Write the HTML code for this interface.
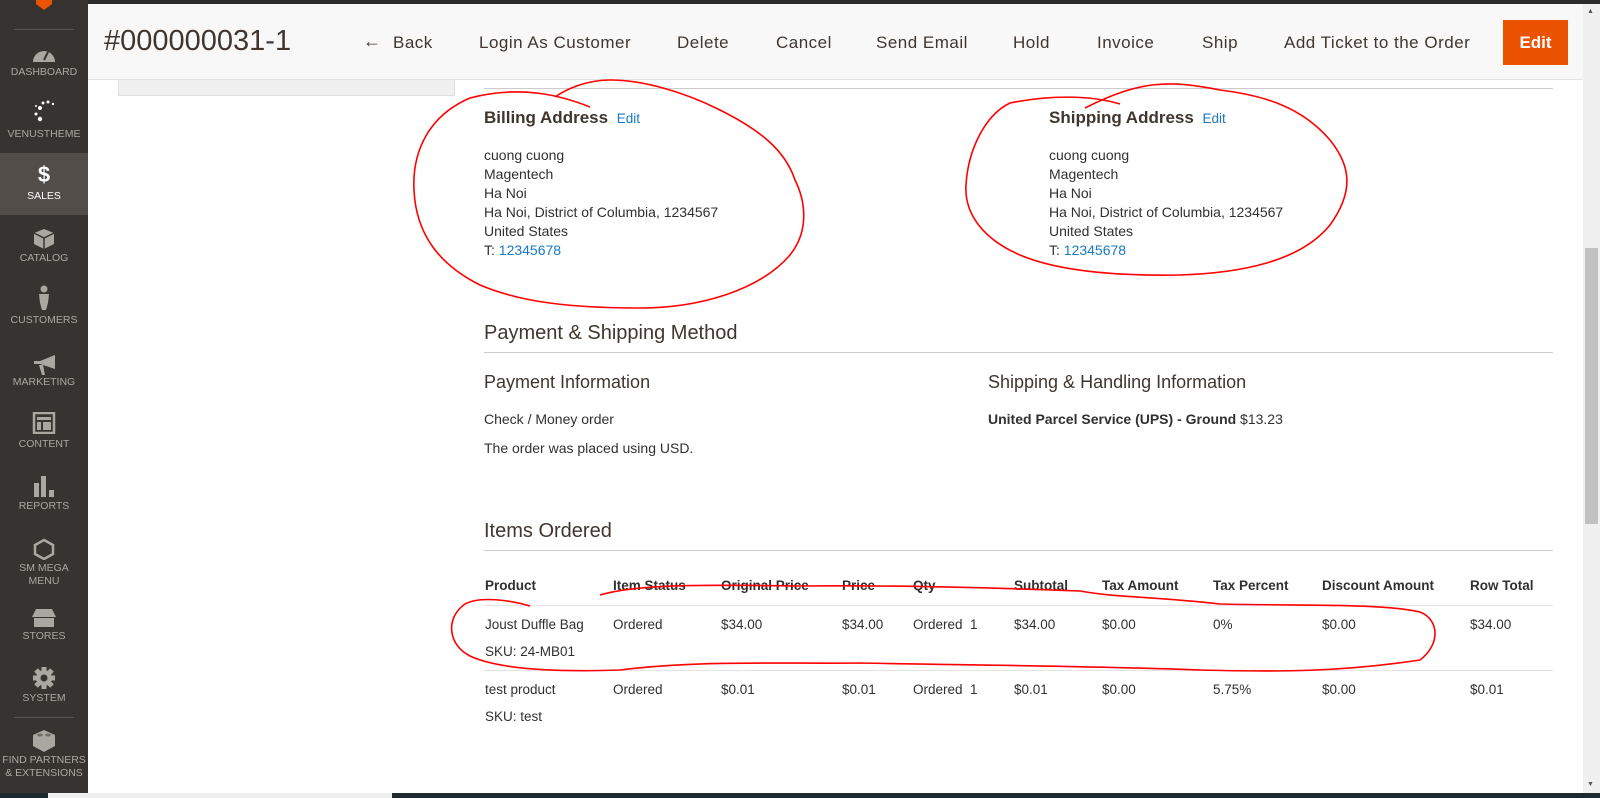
<!DOCTYPE html>
<html><head><meta charset="utf-8"><style>
*{margin:0;padding:0;box-sizing:border-box}
body{width:1600px;height:798px;overflow:hidden;background:#fff;font-family:"Liberation Sans",sans-serif;color:#303030;position:relative}
.a{position:absolute;white-space:nowrap}
#sb{position:absolute;left:0;top:0;width:88px;height:793px;background:#373330}
.lab{position:absolute;left:0;width:88px;text-align:center;font-size:10.5px;color:#aaa6a0;line-height:13px}
.ico{position:absolute;left:0;width:88px}
#hd{position:absolute;left:88px;top:4px;width:1495px;height:76px;background:#f8f8f8;border-bottom:1px solid #e3e3e3}
.nb{position:absolute;top:33px;font-size:17px;color:#41362f;letter-spacing:.5px}
.t{font-size:14px;color:#303030}
.h3{font-size:20px;font-weight:300;color:#41362f}
.hr{position:absolute;left:484px;width:1069px;height:1px;background:#cccccc}
.th{font-size:13.5px;font-weight:bold;color:#303030}
.td{font-size:13.5px;color:#303030}
.blue{color:#1979c3}
</style></head><body>
<div class="a" style="left:0;top:0;width:1600px;height:4px;background:#2c2c2c"></div>
<div id="sb">
 <div class="a" style="left:36px;top:0;width:16px;height:10px;background:#eb5202;clip-path:polygon(0 0,100% 0,100% 40%,50% 100%,0 40%)"></div>
 <div class="a" style="left:14px;top:29px;width:60px;height:1px;background:#5a5551"></div>
 <svg class="ico" style="top:45px" height="18" viewBox="0 0 88 18"><path d="M33 17 A11 11 0 0 1 55 17 Z" fill="#aaa6a0"/><path d="M44 15 L48 7" stroke="#373330" stroke-width="2"/></svg>
 <div class="lab" style="top:66px">DASHBOARD</div>
 <svg class="ico" style="top:100px" height="26" viewBox="0 0 88 26"><g fill="#fff"><circle cx="43" cy="3" r="1.5"/><circle cx="48" cy="2" r="1.5"/><circle cx="53" cy="4" r="1.2"/><circle cx="40" cy="8" r="2"/><circle cx="36" cy="6" r="1"/><circle cx="36" cy="14" r="1.5"/><circle cx="40" cy="19" r="2.2"/></g></svg>
 <div class="lab" style="top:128px">VENUSTHEME</div>
 <div class="a" style="left:0;top:153px;width:88px;height:62px;background:#524d49"></div>
 <div class="lab" style="top:163px;font-size:22px;font-weight:bold;color:#fff;line-height:24px">$</div>
 <div class="lab" style="top:190px;color:#fff">SALES</div>
 <svg class="ico" style="top:228px" height="22" viewBox="0 0 88 22"><path d="M44 1 L54 5 L54 16 L44 21 L34 16 L34 5 Z" fill="#aaa6a0"/><path d="M34 5 L44 10 L54 5 M44 10 V21" stroke="#373330" stroke-width="1.5" fill="none"/></svg>
 <div class="lab" style="top:252px">CATALOG</div>
 <svg class="ico" style="top:285px" height="26" viewBox="0 0 88 26"><circle cx="44" cy="4" r="3.5" fill="#aaa6a0"/><path d="M39 9 H49 L48 18 L46 25 H42 L40 18 Z" fill="#aaa6a0"/></svg>
 <div class="lab" style="top:314px">CUSTOMERS</div>
 <svg class="ico" style="top:354px" height="22" viewBox="0 0 88 22"><path d="M34 7 H40 L55 1 V15 L40 10 H34 Z M39 11 L42 21 H45 L43 11 Z" fill="#aaa6a0"/></svg>
 <div class="lab" style="top:376px">MARKETING</div>
 <svg class="ico" style="top:412px" height="22" viewBox="0 0 88 22"><rect x="34" y="1" width="20" height="20" fill="none" stroke="#aaa6a0" stroke-width="2.5"/><rect x="37" y="5" width="14" height="3" fill="#aaa6a0"/><rect x="37" y="10" width="4" height="8" fill="#aaa6a0"/><rect x="43" y="10" width="8" height="8" fill="#aaa6a0"/></svg>
 <div class="lab" style="top:438px">CONTENT</div>
 <svg class="ico" style="top:476px" height="21" viewBox="0 0 88 21"><rect x="34" y="7" width="5" height="14" fill="#aaa6a0"/><rect x="41" y="0" width="5" height="21" fill="#aaa6a0"/><rect x="49" y="14" width="5" height="7" fill="#aaa6a0"/></svg>
 <div class="lab" style="top:500px">REPORTS</div>
 <svg class="ico" style="top:538px" height="22" viewBox="0 0 88 22"><path d="M44 2 L53 7 V16 L44 21 L35 16 V7 Z" fill="none" stroke="#aaa6a0" stroke-width="2.5"/></svg>
 <div class="lab" style="top:562px">SM MEGA<br>MENU</div>
 <svg class="ico" style="top:608px" height="20" viewBox="0 0 88 20"><path d="M36 1 H52 L56 9 H32 Z" fill="#aaa6a0"/><rect x="34" y="10" width="20" height="9" fill="#aaa6a0"/></svg>
 <div class="lab" style="top:630px">STORES</div>
 <svg class="ico" style="top:667px" height="22" viewBox="0 0 88 22"><circle cx="44" cy="11" r="8" fill="#aaa6a0"/><g stroke="#aaa6a0" stroke-width="5"><path d="M44 0 V22 M33 11 H55 M36 3 L52 19 M52 3 L36 19"/></g><circle cx="44" cy="11" r="3.5" fill="#373330"/></svg>
 <div class="lab" style="top:692px">SYSTEM</div>
 <div class="a" style="left:14px;top:717px;width:60px;height:1px;background:#5a5551"></div>
 <svg class="ico" style="top:729px" height="24" viewBox="0 0 88 24"><path d="M44 1 L55 6 V17 L44 23 L33 17 V6 Z" fill="#aaa6a0"/><ellipse cx="40" cy="6" rx="3" ry="1.5" fill="#373330" opacity=".5"/><ellipse cx="48" cy="6" rx="3" ry="1.5" fill="#373330" opacity=".5"/></svg>
 <div class="lab" style="top:754px">FIND PARTNERS<br>&amp; EXTENSIONS</div>
</div>
<div id="hd"></div>
<div class="a" style="left:104px;top:25px;font-size:29px;color:#41362f">#000000031-1</div>
<div class="nb" style="left:363px;top:31px;font-size:18px">&#8592;</div>
<div class="nb" style="left:393px">Back</div>
<div class="nb" style="left:479px">Login As Customer</div>
<div class="nb" style="left:677px">Delete</div>
<div class="nb" style="left:776px">Cancel</div>
<div class="nb" style="left:876px">Send Email</div>
<div class="nb" style="left:1013px">Hold</div>
<div class="nb" style="left:1097px">Invoice</div>
<div class="nb" style="left:1202px">Ship</div>
<div class="nb" style="left:1284px">Add Ticket to the Order</div>
<div class="a" style="left:1503px;top:20px;width:65px;height:45px;background:#eb5202;color:#fff;font-size:17px;font-weight:bold;text-align:center;line-height:45px">Edit</div>
<div class="a" style="left:1583px;top:4px;width:17px;height:789px;background:#f0f0f0"></div>
<div class="a" style="left:1585px;top:248px;width:13px;height:276px;background:#c1c1c1"></div>
<div class="a" style="left:1587px;top:8px;font-size:7px;color:#555">&#9650;</div>
<div class="a" style="left:1587px;top:781px;font-size:7px;color:#555">&#9660;</div>
<div class="a" style="left:0;top:793px;width:1600px;height:5px;background:#1f2a30"></div>
<div class="a" style="left:48px;top:793px;width:344px;height:5px;background:#f0f0f0"></div>
<div class="a" style="left:118px;top:80px;width:337px;height:16px;background:#f0f0f0;border:1px solid #e0e0e0;border-top:none"></div>

<div class="hr" style="top:88px"></div>
<div class="a" style="left:484px;top:108px;font-size:17px;font-weight:600;color:#41362f">Billing Address <span class="blue" style="font-size:13.5px;font-weight:normal;margin-left:4px">Edit</span></div>
<div class="a t" style="left:484px;top:146px;line-height:19px">cuong cuong<br>Magentech<br>Ha Noi<br>Ha Noi, District of Columbia, 1234567<br>United States<br>T: <span class="blue">12345678</span></div>
<div class="a" style="left:1049px;top:108px;font-size:17px;font-weight:600;color:#41362f">Shipping Address <span class="blue" style="font-size:13.5px;font-weight:normal;margin-left:4px">Edit</span></div>
<div class="a t" style="left:1049px;top:146px;line-height:19px">cuong cuong<br>Magentech<br>Ha Noi<br>Ha Noi, District of Columbia, 1234567<br>United States<br>T: <span class="blue">12345678</span></div>

<div class="a h3" style="left:484px;top:322px">Payment &amp; Shipping Method</div>
<div class="hr" style="top:352px"></div>
<div class="a" style="left:484px;top:372px;font-size:18px;color:#41362f">Payment Information</div>
<div class="a" style="left:988px;top:372px;font-size:18px;color:#41362f">Shipping &amp; Handling Information</div>
<div class="a t" style="left:484px;top:411px">Check / Money order</div>
<div class="a t" style="left:484px;top:440px">The order was placed using USD.</div>
<div class="a t" style="left:988px;top:411px"><b>United Parcel Service (UPS) - Ground</b> $13.23</div>

<div class="a h3" style="left:484px;top:520px">Items Ordered</div>
<div class="hr" style="top:550px"></div>
<div class="a th" style="left:485px;top:578px">Product</div>
<div class="a th" style="left:613px;top:578px">Item Status</div>
<div class="a th" style="left:721px;top:578px">Original Price</div>
<div class="a th" style="left:842px;top:578px">Price</div>
<div class="a th" style="left:913px;top:578px">Qty</div>
<div class="a th" style="left:1014px;top:578px">Subtotal</div>
<div class="a th" style="left:1102px;top:578px">Tax Amount</div>
<div class="a th" style="left:1213px;top:578px">Tax Percent</div>
<div class="a th" style="left:1322px;top:578px">Discount Amount</div>
<div class="a th" style="left:1470px;top:578px">Row Total</div>
<div class="a" style="left:484px;top:605px;width:1069px;height:1px;background:#e3e3e3"></div>
<div class="a td" style="left:485px;top:617px">Joust Duffle Bag</div>
<div class="a td" style="left:485px;top:644px">SKU: 24-MB01</div>
<div class="a td" style="left:613px;top:617px">Ordered</div>
<div class="a td" style="left:721px;top:617px">$34.00</div>
<div class="a td" style="left:842px;top:617px">$34.00</div>
<div class="a td" style="left:913px;top:617px">Ordered&nbsp; 1</div>
<div class="a td" style="left:1014px;top:617px">$34.00</div>
<div class="a td" style="left:1102px;top:617px">$0.00</div>
<div class="a td" style="left:1213px;top:617px">0%</div>
<div class="a td" style="left:1322px;top:617px">$0.00</div>
<div class="a td" style="left:1470px;top:617px">$34.00</div>
<div class="a" style="left:484px;top:670px;width:1069px;height:1px;background:#e3e3e3"></div>
<div class="a td" style="left:485px;top:682px">test product</div>
<div class="a td" style="left:485px;top:709px">SKU: test</div>
<div class="a td" style="left:613px;top:682px">Ordered</div>
<div class="a td" style="left:721px;top:682px">$0.01</div>
<div class="a td" style="left:842px;top:682px">$0.01</div>
<div class="a td" style="left:913px;top:682px">Ordered&nbsp; 1</div>
<div class="a td" style="left:1014px;top:682px">$0.01</div>
<div class="a td" style="left:1102px;top:682px">$0.00</div>
<div class="a td" style="left:1213px;top:682px">5.75%</div>
<div class="a td" style="left:1322px;top:682px">$0.00</div>
<div class="a td" style="left:1470px;top:682px">$0.01</div>

<svg class="a" style="left:0;top:0" width="1600" height="798" viewBox="0 0 1600 798">
<g fill="none" stroke="#f00" stroke-width="1.6">
<path d="M590 107 C560 95 520 85 470 98 C430 115 412 150 414 190 C416 235 440 265 480 285 C520 302 570 308 640 308 C700 308 760 290 790 255 C810 230 805 200 795 180 C785 150 760 130 720 110 C680 90 640 80 610 80 C585 80 565 90 555 97"/>
<path d="M1120 104 C1090 95 1050 95 1010 103 C985 115 968 150 966 185 C964 215 985 240 1020 255 C1060 272 1120 276 1180 275 C1240 273 1300 262 1330 225 C1355 190 1350 165 1330 140 C1300 105 1260 95 1220 90 C1170 80 1140 80 1085 108"/>
<path d="M530 606 C510 600 480 596 465 604 C445 618 448 645 470 656 C500 670 560 672 620 670 C700 660 780 664 860 663 C960 665 1100 666 1200 670 C1280 672 1340 672 1420 660 C1440 645 1440 620 1420 612 C1380 603 1300 606 1220 604 C1150 596 1120 598 1080 591 C1000 588 900 585 800 586 C720 585 640 583 600 595"/>
</g></svg>
</body></html>
